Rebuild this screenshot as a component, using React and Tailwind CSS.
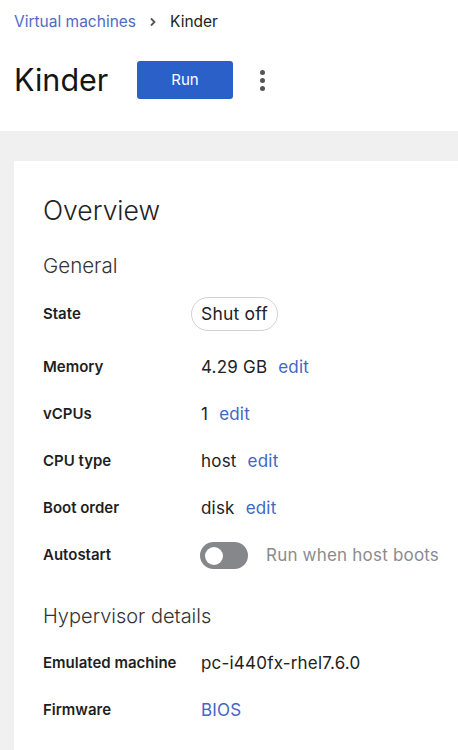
import React from 'react';

const Row = ({ label, children, className = '' }) => (
  <div className={`flex items-center h-[47px] ${className}`}>
    <div className="w-[158px] shrink-0 text-[15px] font-semibold text-[#1f1f1f]">{label}</div>
    <div className="flex items-center text-[17px] text-[#222] tracking-[0.2px]">{children}</div>
  </div>
);

const Edit = () => <a href="#" className="ml-[11px] text-[#4166c4]">edit</a>;

export default function App() {
  return (
    <div className="w-[458px] h-[750px] overflow-hidden bg-[#f0f0f0] font-['Inter',sans-serif]">
      <header className="bg-white h-[131px] px-[14px] pt-[11px]">
        <nav className="flex items-center text-[15.5px] leading-[22px]">
          <a href="#" className="text-[#4f6bc2]">Virtual machines</a>
          <svg className="mx-[12px] w-[10px] h-[10px]" viewBox="0 0 10 10">
            <path d="M3 1.5 L6.5 5 L3 8.5" fill="none" stroke="#555" strokeWidth="1.8" />
          </svg>
          <span className="text-[#222]">Kinder</span>
        </nav>
        <div className="flex items-center mt-[28px]">
          <h1 className="text-[30.5px] leading-[38px] text-[#151515] w-[123px]">Kinder</h1>
          <button className="w-[96px] h-[38px] rounded-[3px] bg-[#2b60c9] text-white text-[15px]">Run</button>
          <button className="ml-[27px] flex flex-col gap-[3px] items-center">
            <span className="w-[5px] h-[5px] rounded-full bg-[#555]" />
            <span className="w-[5px] h-[5px] rounded-full bg-[#555]" />
            <span className="w-[5px] h-[5px] rounded-full bg-[#555]" />
          </button>
        </div>
      </header>
      <main className="ml-[14px] mt-[30px] bg-white pl-[29px] pt-[33px] pb-[20px]">
        <h2 className="text-[26.5px] leading-[32px] text-[#222] font-light">Overview</h2>
        <h3 className="mt-[27px] text-[20.5px] leading-[26px] text-[#333] font-light">General</h3>
        <div className="flex items-center h-[34px] mt-[18px]">
          <div className="w-[148px] shrink-0 text-[15px] font-semibold text-[#1f1f1f]">State</div>
          <span className="h-[34px] px-[9px] flex items-center rounded-full border border-[#d2d2d2] text-[17.5px] text-[#222] tracking-[0.2px]">Shut off</span>
        </div>
        <Row label="Memory" className="mt-[13px]">4.29 GB<Edit /></Row>
        <Row label="vCPUs">1<Edit /></Row>
        <Row label="CPU type">host<Edit /></Row>
        <Row label="Boot order">disk<Edit /></Row>
        <div className="flex items-center h-[47px]">
          <div className="w-[157px] shrink-0 text-[15px] font-semibold text-[#1f1f1f]">Autostart</div>
          <span className="relative w-[48px] h-[27px] rounded-full bg-[#85878b]">
            <span className="absolute left-[5px] top-[4.5px] w-[18px] h-[18px] rounded-full bg-white" />
          </span>
          <span className="ml-[18px] text-[17px] text-[#8a8b8f] tracking-[0.2px]">Run when host boots</span>
        </div>
        <h3 className="mt-[24px] text-[20px] leading-[26px] text-[#333] font-light">Hypervisor details</h3>
        <Row label="Emulated machine" className="mt-[11px]">pc-i440fx-rhel7.6.0</Row>
        <Row label="Firmware"><a href="#" className="text-[#4166c4]">BIOS</a></Row>
      </main>
    </div>
  );
}
